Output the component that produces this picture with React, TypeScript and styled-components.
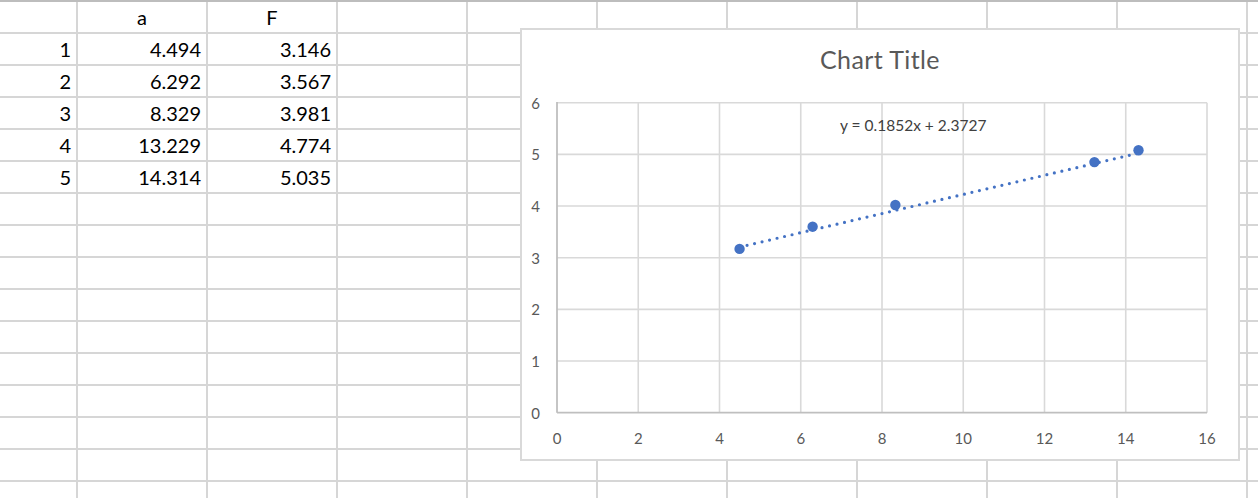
import * as React from 'react';
import styled, {createGlobalStyle} from 'styled-components';

const GlobalStyle = createGlobalStyle`
  html, body {
    margin: 0;
    padding: 0;
    background: #fff;
    overflow: hidden;
  }
  body {
    font-family: Lato, "Open Sans", sans-serif;
  }
`;

const COLS = 11;
const BODY_ROWS = 15;

const data: [number, number, number][] = [
  [1, 4.494, 3.146],
  [2, 6.292, 3.567],
  [3, 8.329, 3.981],
  [4, 13.229, 4.774],
  [5, 14.314, 5.035],
];

// where the markers sit on the plot (as drawn by the spreadsheet)
const plotted: [number, number][] = [
  [4.494, 3.17],
  [6.292, 3.6],
  [8.329, 4.02],
  [13.229, 4.85],
  [14.314, 5.08],
];

const Sheet = styled.div`
  position: relative;
  width: 1258px;
  height: 498px;
  overflow: hidden;
  border-top: 2px solid #bdbdbd;
  box-sizing: border-box;
  display: grid;
  grid-template-columns: 78px repeat(9, 130px) 1fr;
  grid-template-rows: 32px;
  grid-auto-rows: 32px;
  align-content: start;
  color: #000;
  font-size: 20px;
`;

const Cell = styled.div<{$align?: 'left' | 'right' | 'center'; $selected?: boolean}>`
  box-sizing: border-box;
  position: relative;
  border-right: 2px solid #d6d6d6;
  border-bottom: 2px solid #d6d6d6;
  display: flex;
  align-items: center;
  justify-content: ${(p) =>
    p.$align === 'right' ? 'flex-end' : p.$align === 'center' ? 'center' : 'flex-start'};
  padding: 0 5px 0 5px;
  white-space: nowrap;
  overflow: hidden;
  line-height: 1;

  ${(p) =>
    p.$selected &&
    `
    &::before {
      content: '';
      position: absolute;
      left: -1px;
      right: -1px;
      top: -2px;
      height: 2px;
      background: #1e7145;
    }
  `}
`;

const Frame = styled.div`
  position: absolute;
  left: 520px;
  top: 26px;
  width: 720px;
  height: 433px;
  box-sizing: border-box;
  border: 2px solid #d9d9d9;
  background: #fff;
  display: flex;
  flex-direction: column;
`;

const Title = styled.div`
  height: 62px;
  display: flex;
  align-items: center;
  justify-content: center;
  padding-bottom: 5px;
  box-sizing: border-box;
  font-size: 25px;
  letter-spacing: 0.4px;
  color: #595959;
`;

const Plot = styled.svg`
  display: block;
  font-family: Lato, "Open Sans", sans-serif;
`;

const BLUE = '#4472c4';
const X = (x: number) => 35 + x * 40.625;
const Y = (y: number) => 320.7 - y * 51.67;

const ScatterChart = () => {
  const xTicks = [0, 2, 4, 6, 8, 10, 12, 14, 16];
  const yTicks = [0, 1, 2, 3, 4, 5, 6];
  const x1 = 4.494;
  const x2 = 14.314;
  const f = (x: number) => 0.1852 * x + 2.3727;
  return (
    <Frame>
      <Title>Chart Title</Title>
      <Plot width={716} height={367} viewBox="0 0 716 367">
        {xTicks.slice(1).map((t) => (
          <line key={`vx${t}`} x1={X(t)} x2={X(t)} y1={Y(6)} y2={Y(0)} stroke="#d9d9d9" strokeWidth={1.6} />
        ))}
        {yTicks.slice(1).map((t) => (
          <line key={`hy${t}`} x1={X(0)} x2={X(16)} y1={Y(t)} y2={Y(t)} stroke="#d9d9d9" strokeWidth={1.6} />
        ))}
        <line x1={X(0)} x2={X(0)} y1={Y(6) - 0.8} y2={Y(0)} stroke="#bfbfbf" strokeWidth={1.8} />
        <line x1={X(0)} x2={X(16)} y1={Y(0)} y2={Y(0)} stroke="#bfbfbf" strokeWidth={1.8} />

        {yTicks.map((t) => (
          <text key={`ly${t}`} x={18} y={Y(t)} textAnchor="end" dominantBaseline="central" fontSize={15} fill="#595959">
            {t}
          </text>
        ))}
        {xTicks.map((t) => (
          <text key={`lx${t}`} x={X(t)} y={346} textAnchor="middle" dominantBaseline="central" fontSize={15} fill="#595959">
            {t}
          </text>
        ))}

        <line
          x1={X(x1)}
          y1={Y(f(x1))}
          x2={X(x2)}
          y2={Y(f(x2))}
          stroke={BLUE}
          strokeWidth={3.2}
          strokeLinecap="round"
          strokeDasharray="0 7.7"
        />
        {plotted.map(([a, b]) => (
          <circle key={a} cx={X(a)} cy={Y(b)} r={5.2} fill={BLUE} />
        ))}
        <text x={318} y={33} dominantBaseline="central" fontSize={15.5} fill="#404040">
          y = 0.1852x + 2.3727
        </text>
      </Plot>
    </Frame>
  );
};

const App = () => {
  const header = ['', 'a', 'F'];
  return (
    <>
      <GlobalStyle />
      <Sheet>
        {Array.from({length: COLS}, (_, c) => (
          <Cell key={`h${c}`} $align="center" $selected={c === 4}>
            {header[c] ?? ''}
          </Cell>
        ))}
        {Array.from({length: BODY_ROWS}, (_, r) =>
          Array.from({length: COLS}, (_, c) => {
            const row = data[r];
            const value = row && c < 3 ? (c === 0 ? String(row[0]) : row[c].toFixed(3)) : '';
            return (
              <Cell key={`r${r}c${c}`} $align="right">
                {value}
              </Cell>
            );
          }),
        )}
        <ScatterChart />
      </Sheet>
    </>
  );
};

export default App;
